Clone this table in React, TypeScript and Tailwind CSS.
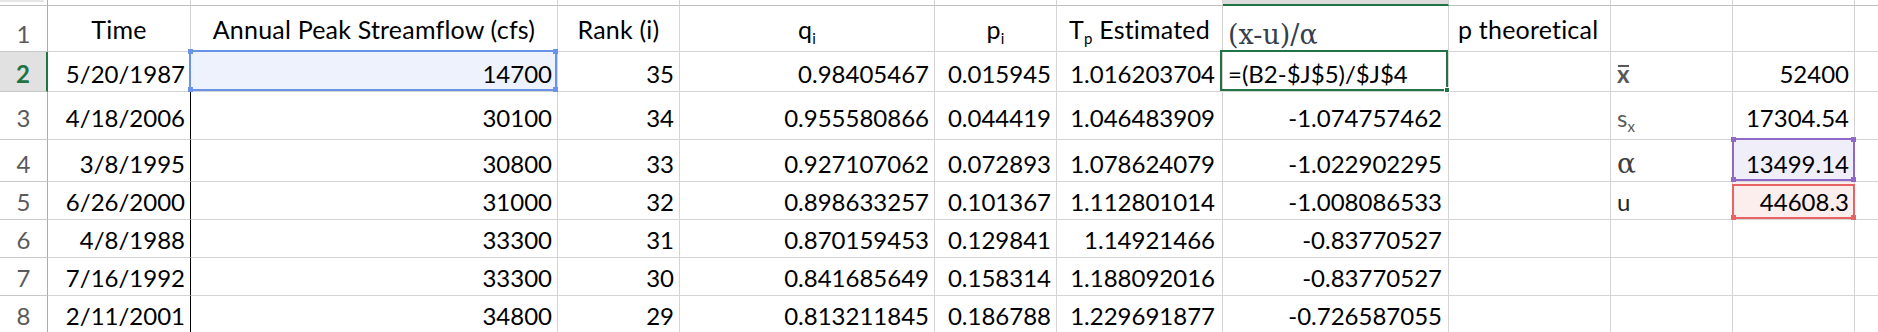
import React from "react";

const W = [
  "w-[143px]",
  "w-[367px]",
  "w-[122px]",
  "w-[255px]",
  "w-[122px]",
  "w-[166px]",
  "w-[226px]",
  "w-[162px]",
  "w-[122px]",
  "w-[122px]",
];

const ROW_H = [
  "h-[46px]",
  "h-[40px]",
  "h-[48px]",
  "h-[42px]",
  "h-[38px]",
  "h-[38px]",
  "h-[38px]",
  "h-[38px]",
];

const ROW_PB = ["pb-[10px]", "pb-[5px]", "pb-[9px]", "pb-[5px]", "pb-[5px]", "pb-[5px]", "pb-[5px]", "pb-[5px]"];

type Align = "l" | "r" | "c";
type CellDef = { c?: React.ReactNode; a?: Align; bg?: string; extra?: string; overlay?: React.ReactNode };

const Sub = ({ children }: { children: React.ReactNode }) => (
  <span className="relative top-[5px] text-[15px] leading-none">{children}</span>
);

const XBar = () => (
  <span className="relative inline-block font-bold text-[#595959]">
    <span className="absolute left-[1px] right-[1px] top-[3px] h-[2px] bg-[#595959]" />
    x
  </span>
);

const Hd = ({ children }: { children: React.ReactNode }) => (
  <span className="text-[25px] tracking-[0.2px]">{children}</span>
);

/* overlays drawn over cells: reference boxes and active cell */
const BlueBox = () => (
  <div className="pointer-events-none absolute -left-[2px] -top-[2px] right-0 bottom-0 z-10 border-2 border-[#6a92e6]">
    <div className="absolute -left-[3px] -top-[3px] w-[5px] h-[5px] bg-[#6a92e6]" />
    <div className="absolute -right-[3px] -top-[3px] w-[5px] h-[5px] bg-[#6a92e6]" />
    <div className="absolute -left-[3px] -bottom-[3px] w-[5px] h-[5px] bg-[#6a92e6]" />
    <div className="absolute -right-[3px] -bottom-[3px] w-[5px] h-[5px] bg-[#6a92e6]" />
  </div>
);

const GreenBox = () => (
  <div className="pointer-events-none absolute -left-[3px] -top-[2px] right-0 bottom-0 z-10 border-2 border-[#217346]">
    <div className="absolute -right-[4px] -bottom-[4px] w-[6px] h-[6px] bg-[#217346] border border-white" />
  </div>
);

const PurpleBox = () => (
  <div className="pointer-events-none absolute -left-[1px] -top-[2px] -right-[1px] bottom-0 z-10 border-2 border-[#9068c8]">
    <div className="absolute -left-[3px] -top-[3px] w-[5px] h-[5px] bg-[#9068c8]" />
    <div className="absolute -right-[3px] -top-[3px] w-[5px] h-[5px] bg-[#9068c8]" />
    <div className="absolute -left-[3px] -bottom-[3px] w-[5px] h-[5px] bg-[#9068c8]" />
    <div className="absolute -right-[3px] -bottom-[3px] w-[5px] h-[5px] bg-[#9068c8]" />
  </div>
);

const RedBox = () => (
  <div className="pointer-events-none absolute -left-[1px] top-[2px] -right-[1px] bottom-0 z-10 border-2 border-[#e86464]">
    <div className="absolute -left-[3px] -bottom-[3px] w-[5px] h-[5px] bg-[#e86464]" />
    <div className="absolute -right-[3px] -bottom-[3px] w-[5px] h-[5px] bg-[#e86464]" />
  </div>
);

const header: CellDef[] = [
  { c: <Hd>Time</Hd>, a: "c" },
  { c: <Hd>Annual Peak Streamflow (cfs)</Hd>, a: "c" },
  { c: <Hd>Rank (i)</Hd>, a: "c" },
  {
    c: (
      <Hd>
        q<Sub>i</Sub>
      </Hd>
    ),
    a: "c",
  },
  {
    c: (
      <Hd>
        p<Sub>i</Sub>
      </Hd>
    ),
    a: "c",
  },
  {
    c: (
      <Hd>
        T<Sub>p</Sub> Estimated
      </Hd>
    ),
    a: "c",
  },
  {
    c: <span className="font-['DejaVu_Serif',serif] text-[27px] text-[#34404e]">(x-u)/α</span>,
    a: "l",
    extra: "pl-[5px] !pb-[4px]",
  },
  { c: <Hd>p theoretical</Hd>, a: "l", extra: "pl-[9px]" },
  {},
  {},
];

type DataRow = {
  date: string;
  q: string;
  rank: string;
  qi: string;
  pi: string;
  tp: string;
  g: string;
  label?: React.ReactNode;
  val?: string;
  valBg?: string;
  valOverlay?: React.ReactNode;
};

const data: DataRow[] = [
  {
    date: "5/20/1987",
    q: "14700",
    rank: "35",
    qi: "0.98405467",
    pi: "0.015945",
    tp: "1.016203704",
    g: "=(B2-$J$5)/$J$4",
    label: <XBar />,
    val: "52400",
  },
  {
    date: "4/18/2006",
    q: "30100",
    rank: "34",
    qi: "0.955580866",
    pi: "0.044419",
    tp: "1.046483909",
    g: "-1.074757462",
    label: (
      <span className="text-[#595959]">
        s<Sub>x</Sub>
      </span>
    ),
    val: "17304.54",
  },
  {
    date: "3/8/1995",
    q: "30800",
    rank: "33",
    qi: "0.927107062",
    pi: "0.072893",
    tp: "1.078624079",
    g: "-1.022902295",
    label: <span className="font-['DejaVu_Serif',serif] text-[28px] text-[#404040]">α</span>,
    val: "13499.14",
    valBg: "bg-[#f0eef9]",
    valOverlay: <PurpleBox />,
  },
  {
    date: "6/26/2000",
    q: "31000",
    rank: "32",
    qi: "0.898633257",
    pi: "0.101367",
    tp: "1.112801014",
    g: "-1.008086533",
    label: <span className="text-[#262626]">u</span>,
    val: "44608.3",
    valBg: "bg-[#fdeeee]",
    valOverlay: <RedBox />,
  },
  {
    date: "4/8/1988",
    q: "33300",
    rank: "31",
    qi: "0.870159453",
    pi: "0.129841",
    tp: "1.14921466",
    g: "-0.83770527",
  },
  {
    date: "7/16/1992",
    q: "33300",
    rank: "30",
    qi: "0.841685649",
    pi: "0.158314",
    tp: "1.188092016",
    g: "-0.83770527",
  },
  {
    date: "2/11/2001",
    q: "34800",
    rank: "29",
    qi: "0.813211845",
    pi: "0.186788",
    tp: "1.229691877",
    g: "-0.726587055",
  },
];

function Cell({ w, def, pb, blackRight }: { w: string; def: CellDef; pb: string; blackRight?: boolean }) {
  const align =
    def.a === "r" ? "justify-end pr-[5px]" : def.a === "c" ? "justify-center" : "justify-start pl-[5px]";
  return (
    <div
      className={`relative ${w} h-full shrink-0 border-r border-b border-[#d4d4d4] ${
        blackRight ? "border-r-black" : ""
      } flex items-end whitespace-nowrap ${pb} ${align} ${def.bg ?? ""} ${def.extra ?? ""}`}
    >
      {def.c}
      {def.overlay}
    </div>
  );
}

function RowHeader({ n, selected, pb }: { n: number; selected?: boolean; pb: string }) {
  return (
    <div
      className={`w-[48px] h-full shrink-0 border-b border-[#c8c8c8] flex items-end justify-center ${pb} ${
        selected
          ? "bg-[#e1e1e1] border-r-2 border-r-[#217346] text-[#217346] font-bold"
          : "border-r border-r-[#ababab] text-[#5a5a5a]"
      }`}
    >
      {n}
    </div>
  );
}

export default function App() {
  return (
    <div className="w-[1878px] h-[332px] overflow-hidden bg-white font-['Lato',sans-serif] text-[24px] leading-[24px] text-black">
      {/* column header strip (clipped) */}
      <div className="flex h-[6px]">
        <div className="w-[48px] h-full shrink-0 border-r border-b border-r-[#ababab] border-b-[#bfbfbf] bg-white">
          <div className="w-[44px] h-[2px] bg-[#e6e6e6]" />
        </div>
        {W.map((w, i) => (
          <div
            key={i}
            className={`${w} h-full shrink-0 border-r border-[#d4d4d4] ${
              i === 6 ? "bg-[#dcdcdc] border-b-2 border-b-[#217346]" : "border-b border-b-[#bfbfbf]"
            }`}
          />
        ))}
        <div className="flex-1 h-full border-b border-b-[#bfbfbf]" />
      </div>

      {/* row 1 */}
      <div className={`flex ${ROW_H[0]}`}>
        <RowHeader n={1} pb="pb-[5px]" />
        {header.map((d, i) => (
          <Cell key={i} w={W[i]} def={d} pb={ROW_PB[0]} />
        ))}
        <div className="flex-1 h-full border-b border-[#d4d4d4]" />
      </div>

      {data.map((r, ri) => {
        const pb = ROW_PB[ri + 1];
        const defs: CellDef[] = [
          { c: r.date, a: "r" },
          { c: r.q, a: "r", bg: ri === 0 ? "bg-[#edf2fc]" : "", overlay: ri === 0 ? <BlueBox /> : null },
          { c: r.rank, a: "r" },
          { c: r.qi, a: "r" },
          { c: r.pi, a: "r" },
          { c: r.tp, a: "r", extra: "pr-[7px]" },
          ri === 0
            ? { c: r.g, a: "l", extra: "pl-[4px]", overlay: <GreenBox /> }
            : { c: r.g, a: "r", extra: "pr-[6px]" },
          {},
          { c: r.label, a: "l", extra: "pl-[6px]" },
          { c: r.val, a: "r", bg: r.valBg, overlay: r.valOverlay },
        ];
        return (
          <div key={ri} className={`flex ${ROW_H[ri + 1]}`}>
            <RowHeader n={ri + 2} selected={ri === 0} pb={pb} />
            {defs.map((d, i) => (
              <Cell key={i} w={W[i]} def={d} pb={pb} blackRight={i === 0} />
            ))}
            <div className="flex-1 h-full border-b border-[#d4d4d4]" />
          </div>
        );
      })}
    </div>
  );
}
